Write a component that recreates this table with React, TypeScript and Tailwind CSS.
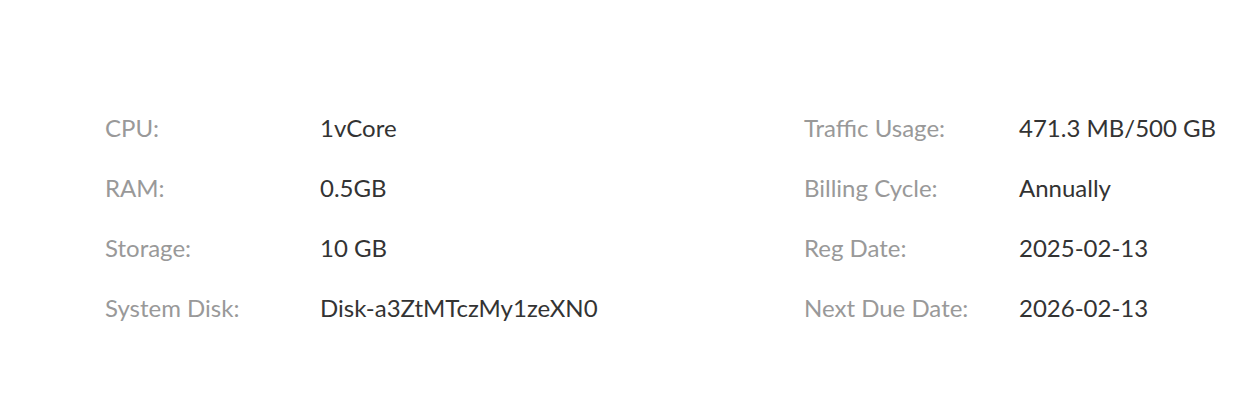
const left = [
  { k: "CPU:", v: "1vCore" },
  { k: "RAM:", v: "0.5GB" },
  { k: "Storage:", v: "10 GB" },
  { k: "System Disk:", v: "Disk-a3ZtMTczMy1zeXN0" },
];

const right = [
  { k: "Traffic Usage:", v: "471.3 MB/500 GB" },
  { k: "Billing Cycle:", v: "Annually" },
  { k: "Reg Date:", v: "2025-02-13" },
  { k: "Next Due Date:", v: "2026-02-13" },
];

function Column({ rows }: { rows: { k: string; v: string }[] }) {
  return (
    <dl>
      {rows.map((row) => (
        <div key={row.k} className="flex items-center h-[60px]">
          <dt className="w-[215px] flex-shrink-0 text-[#999999]">{row.k}</dt>
          <dd className="text-[#333333]">{row.v}</dd>
        </div>
      ))}
    </dl>
  );
}

export default function App() {
  return (
    <div
      className="w-[1236px] h-[408px] bg-white pt-[98px] pl-[105px] text-[24px]"
      style={{ fontFamily: '"Lato", "Noto Sans", sans-serif' }}
    >
      <div className="grid grid-cols-[699px_1fr]">
        <Column rows={left} />
        <Column rows={right} />
      </div>
    </div>
  );
}
